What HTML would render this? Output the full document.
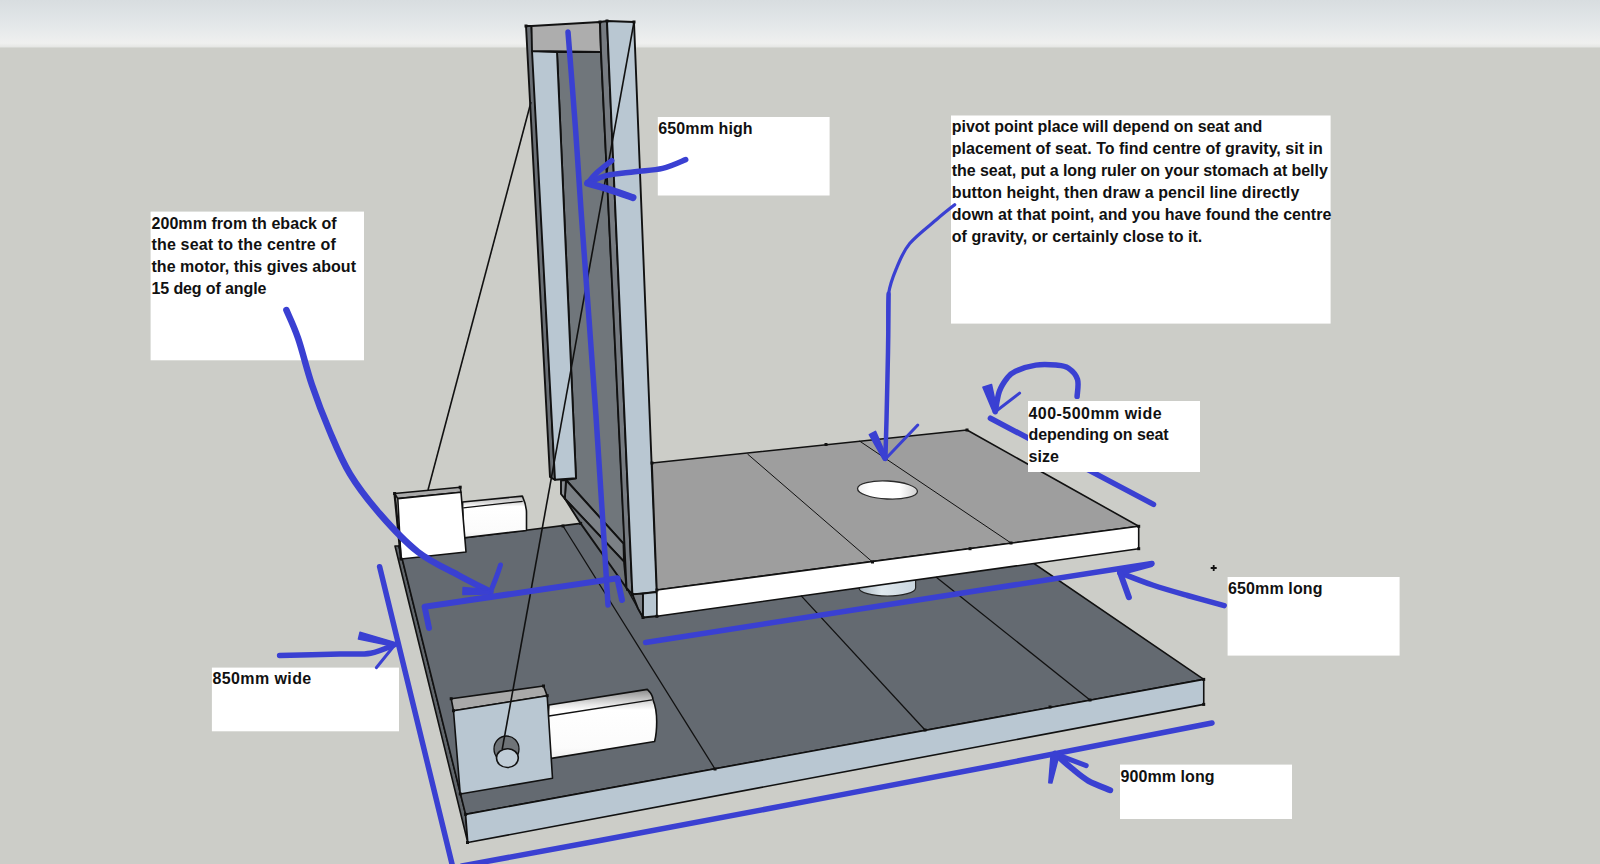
<!DOCTYPE html>
<html><head><meta charset="utf-8">
<style>
html,body{margin:0;padding:0;width:1600px;height:864px;overflow:hidden;background:#cccdc8;}
svg{display:block;}
text{font-family:"Liberation Sans",sans-serif;font-weight:bold;font-size:16px;fill:#111;}
</style></head><body>
<svg width="1600" height="864" viewBox="0 0 1600 864">
<defs>
<linearGradient id="sky" x1="0" y1="0" x2="0" y2="1">
<stop offset="0" stop-color="#d8dde0"/>
<stop offset="0.5" stop-color="#e3e7e9"/>
<stop offset="0.9" stop-color="#eff0ef"/>
<stop offset="1" stop-color="#e2e3e1"/>
</linearGradient>
<linearGradient id="cyl" x1="0" y1="0" x2="0" y2="1">
<stop offset="0" stop-color="#8a8a8a"/>
<stop offset="0.22" stop-color="#e6e6e6"/>
<stop offset="0.3" stop-color="#ffffff"/>
<stop offset="0.85" stop-color="#fbfbfb"/>
<stop offset="1" stop-color="#eeeeee"/>
</linearGradient>
<linearGradient id="cyl2" x1="0" y1="0" x2="0" y2="1">
<stop offset="0" stop-color="#b8b8b8"/>
<stop offset="0.15" stop-color="#d8d8d8"/>
<stop offset="0.25" stop-color="#ffffff"/>
<stop offset="0.85" stop-color="#fbfbfb"/>
<stop offset="1" stop-color="#eeeeee"/>
</linearGradient>
<linearGradient id="hole" x1="0" y1="0" x2="1" y2="0">
<stop offset="0" stop-color="#eeeeee"/>
<stop offset="0.2" stop-color="#ffffff"/>
<stop offset="0.7" stop-color="#ffffff"/>
<stop offset="1" stop-color="#d0d0d0"/>
</linearGradient>
<linearGradient id="piv" x1="0" y1="0" x2="1" y2="0">
<stop offset="0" stop-color="#a9b6c0"/>
<stop offset="0.4" stop-color="#dfe8ee"/>
<stop offset="1" stop-color="#c9d5de"/>
</linearGradient>
</defs>
<rect x="0" y="0" width="1600" height="48" fill="url(#sky)"/>
<rect x="0" y="47.5" width="1600" height="817" fill="#cccdc8"/>

<!-- BASE -->
<g id="base" stroke="#111" stroke-width="1.6" stroke-linejoin="round">
<polygon points="395,546 399,546 465.6,814.4 467.8,842.5" fill="#60656a"/>
<polygon points="399,546 580.6,523.4 913,481 1203.75,679.4 465.6,814.4" fill="#646a71"/>
<polygon points="465.6,814.4 1203.75,679.4 1203.75,704.4 467.8,842.5" fill="#b9c7d2"/>
</g>

<!-- BACK MOTOR -->
<g stroke="#111" stroke-width="1.6" stroke-linejoin="round">
<path d="M462.6,502 L522.4,496.1 C525,502 526.5,507 526.5,513 L526.5,530.5 L464,537.8 C463,525 462.6,512 462.6,502 Z" fill="url(#cyl2)"/>
<line x1="463.3" y1="507.9" x2="522.7" y2="501.3" stroke-width="1.3"/>
<polygon points="394.6,493.5 460.2,487.2 461,492.3 397.8,498.6" fill="#a9a9a9"/>
<polygon points="397.8,498.6 461,492.3 466,552 401,559" fill="#ffffff"/>
<line x1="394.6" y1="493.5" x2="401" y2="559" stroke-width="2.4"/>
</g>

<!-- FRONT MOTOR -->
<g stroke="#111" stroke-width="1.6" stroke-linejoin="round">
<path d="M548.9,705 L647.3,689.4 C650,692 653,696 653,699.8 C655.5,706 656.7,714 656.7,721.7 C656.7,729 656,736 654.6,741.5 L549.9,758.6 C549,745 548.3,730 548.3,717.5 Z" fill="url(#cyl)"/>
<line x1="548.9" y1="716" x2="652" y2="699.8" stroke-width="1.3"/>
<polygon points="451.2,698.75 543.5,686 547.2,695.75 453.5,710.75" fill="#a9a9a9"/>
<polygon points="453.5,710.75 547.2,695.75 552.5,778.25 460.25,794" fill="#b9c7d2"/>
<ellipse cx="506.5" cy="749" rx="12.5" ry="13" fill="#6f7478" stroke-width="1.3"/>
<ellipse cx="507.4" cy="758.1" rx="10.9" ry="9.4" fill="#c0cdd7" stroke-width="1.6"/>
</g>

<!-- COLUMN -->
<g stroke="#111" stroke-width="1.9" stroke-linejoin="round">
<polygon points="557,52 601,52 627,590 623.5,543.7 566,480 576,478.3" fill="#70767b"/>
<polygon points="566,480 623.5,543.7 624,561.7 564.8,498.6" fill="#7c8186"/>
<polygon points="564.8,498.6 624,561.7 626.5,588 580.6,523.4" fill="#6e7378"/>
<polygon points="561,480.5 566,480 564.8,498.6 561,494" fill="#8a8e93"/>
<polygon points="526,26 531.5,26 555,479.8 550,477" fill="#6a6f75"/>
<polygon points="532,51 557,52 576,478.3 555,479.8" fill="#b9c7d2"/>
<polygon points="531.5,26 600,22 601,52 532,51" fill="#adadad"/>
<polygon points="600,22 607,21 632.4,594.4 626.5,588 601,52" fill="#767b81"/>
<polygon points="607,21 634,22 656.7,592 632.4,594.4" fill="#b9c7d2"/>
<polygon points="632.4,594.4 643,593.6 643,617.5 638,608.6" fill="#7b8086"/>
<polygon points="643,593.6 656.7,592 658.3,616 643,617.5" fill="#b9c7d2"/>
<line x1="626.5" y1="588" x2="643" y2="617.5" stroke-width="1.3"/>
</g>

<!-- SEAT -->
<g stroke="#111" stroke-width="1.6" stroke-linejoin="round">
<path d="M859,580 L859,588 A28.3,8 0 0 0 915.6,588 L915.6,580 Z" fill="url(#piv)" stroke="#222" stroke-width="1.2"/>
<polygon points="652,463 967,430 1138.7,526.25 656.9,590" fill="#9e9e9e"/>
<polygon points="656.9,590 1138.7,526.25 1138.7,548.75 656.9,616.25" fill="#ffffff"/>
<line x1="747.5" y1="454" x2="872.5" y2="562" stroke-width="1"/>
<line x1="859.5" y1="441" x2="1011" y2="543" stroke-width="1"/>
<ellipse cx="887.5" cy="490" rx="30" ry="9" fill="url(#hole)" stroke="#2a2a2a" stroke-width="1.3" transform="rotate(3 887.5 490)"/>
</g>

<!-- BASE LINES -->
<g stroke="#111" stroke-width="1.3" fill="none">
<line x1="563" y1="526" x2="715" y2="769"/>
<line x1="801" y1="595.6" x2="925" y2="730"/>
<line x1="936" y1="577" x2="1090" y2="700"/>
</g>

<!-- DOTS -->
<g fill="#111">
<rect x="650.5" y="461.5" width="3" height="3"/><rect x="824.5" y="443" width="3" height="3"/><rect x="965.5" y="428.5" width="3" height="3"/><rect x="1137.2" y="524.8" width="3" height="3"/><rect x="1137.2" y="547.2" width="3" height="3"/><rect x="1009.5" y="541.5" width="3" height="3"/><rect x="968.5" y="547.2" width="3" height="3"/><rect x="871.0" y="560.5" width="3" height="3"/><rect x="655.4" y="588.5" width="3" height="3"/><rect x="655.4" y="614.8" width="3" height="3"/><rect x="1202.2" y="677.9" width="3" height="3"/><rect x="1202.2" y="702.9" width="3" height="3"/><rect x="1088.5" y="698.5" width="3" height="3"/><rect x="1048.5" y="705.5" width="3" height="3"/><rect x="923.5" y="728.5" width="3" height="3"/><rect x="713.5" y="767.5" width="3" height="3"/><rect x="464.1" y="812.9" width="3" height="3"/><rect x="466.0" y="841.0" width="3" height="3"/><rect x="561.5" y="524.5" width="3" height="3"/><rect x="579.1" y="521.9" width="3" height="3"/><rect x="524.5" y="24.5" width="3" height="3"/><rect x="598.5" y="20.5" width="3" height="3"/><rect x="605.5" y="19.5" width="3" height="3"/><rect x="632.5" y="20.5" width="3" height="3"/><rect x="630.9" y="592.9" width="3" height="3"/><rect x="641.5" y="616.0" width="3" height="3"/><rect x="393.1" y="492.0" width="3" height="3"/><rect x="458.7" y="485.7" width="3" height="3"/><rect x="399.5" y="557.5" width="3" height="3"/><rect x="449.7" y="697.2" width="3" height="3"/><rect x="542.0" y="684.5" width="3" height="3"/><rect x="458.8" y="792.5" width="3" height="3"/><rect x="452.0" y="709.2" width="3" height="3"/><rect x="545.7" y="694.2" width="3" height="3"/>
<path d="M1213.7,565 L1213.7,571 M1210.7,568 L1216.7,568" stroke="#111" stroke-width="1.8"/>
</g>
<!-- CABLES -->
<g stroke="#111" stroke-width="1.6" fill="none">
<line x1="428" y1="490" x2="531" y2="102"/>
<line x1="502.2" y1="749.3" x2="634" y2="22"/>
</g>

<g stroke="#3a40d2" stroke-linecap="round" stroke-linejoin="round" fill="none">
<path d="M990.4,418.2 L1153.5,504.4" stroke-width="5.5"/>
</g>
<!-- TEXT BOXES -->
<g fill="#ffffff">
<rect x="150.6" y="211.6" width="213.4" height="148.7"/>
<rect x="657.8" y="117" width="171.8" height="78.5"/>
<rect x="951" y="115.5" width="379.6" height="208.1"/>
<rect x="1028" y="401" width="172" height="71"/>
<rect x="1227.6" y="577" width="172" height="78.6"/>
<rect x="211.9" y="667.6" width="187.1" height="63.7"/>
<rect x="1120" y="764.6" width="172" height="54.4"/>
</g>
<!-- BLUE MARKER -->
<g stroke="#3a40d2" stroke-linecap="round" stroke-linejoin="round" fill="none">
<path d="M568.0,32.0 C569.3,48.3 573.4,100.3 575.6,130.0 C577.8,159.7 577.6,162.3 581.0,210.0 C584.4,257.7 592.2,361.0 596.0,416.0 C599.8,471.0 602.0,508.5 604.0,540.0 C606.0,571.5 607.3,594.2 608.0,605.0" stroke-width="5.5"/>
<path d="M685.7,159.6 C681.9,161.1 671.1,166.4 662.6,168.4 C654.1,170.4 644.1,170.5 634.8,171.7 C625.5,172.9 614.9,173.5 607.0,175.4 C599.1,177.3 590.8,181.9 587.6,183.2" stroke-width="5.5"/>
<path d="M611.7,160.6 C609.1,162.8 600.0,169.7 596.0,173.5 C592.0,177.3 589.0,181.6 587.6,183.2" stroke-width="5.5"/>
<path d="M587.6,183.2 C591.1,184.2 601.3,186.9 608.9,189.3 C616.5,191.7 629.0,196.2 633.0,197.6" stroke-width="7"/>
<path d="M286.4,310.0 C288.3,314.7 293.7,325.5 298.0,338.0 C302.3,350.5 306.7,369.3 312.0,385.0 C317.3,400.7 323.7,417.2 330.0,432.0 C336.3,446.8 341.7,460.3 350.0,474.0 C358.3,487.7 368.7,501.0 380.0,514.0 C391.3,527.0 405.0,541.8 418.0,552.0 C431.0,562.2 445.9,568.4 458.0,575.0 C470.1,581.6 485.0,589.1 490.4,591.9" stroke-width="6.5"/>
<path d="M500.5,565.0 C499.8,567.2 497.7,573.5 496.0,578.0 C494.3,582.5 491.3,589.6 490.4,591.9" stroke-width="5"/>
<polygon points="462.9,594.5 489.9,594.0 490.1,590.0 463.1,587.5" fill="#3a40d2" stroke="#3a40d2" stroke-width="1.5"/>
<path d="M429,628 L424.6,606.7 L617.5,578.3" stroke-width="6"/>
<path d="M617.5,579.0 L622.0,600.0" stroke-width="6"/>
<path d="M379.6,566.7 L452.5,866.0" stroke-width="5.5"/>
<path d="M279.6,655.4 C289.7,655.2 324.8,654.5 340.0,654.1 C355.2,653.7 361.4,654.8 370.6,653.2 C379.8,651.6 391.0,646.0 395.1,644.5" stroke-width="5.5"/>
<polygon points="358.4,639.1 394.6,646.4 395.6,642.6 360.0,632.3" fill="#3a40d2" stroke="#3a40d2" stroke-width="1.5"/>
<path d="M376.3,667.7 L395.1,644.5" stroke-width="3"/>
<path d="M645.6,642.5 L1152.0,563.5" stroke-width="5.5"/>
<path d="M1224.2,605.6 C1218.1,603.9 1199.5,598.9 1187.5,595.5 C1175.5,592.1 1163.7,588.8 1152.5,585.0 C1141.3,581.2 1125.5,574.8 1120.1,572.7" stroke-width="5.5"/>
<path d="M1120.1,572.7 L1150.7,564.4" stroke-width="6"/>
<path d="M1120.1,572.7 L1128.9,597.2" stroke-width="6"/>
<path d="M462.0,866.0 C485.0,861.8 510.3,857.4 600.0,840.5 C689.7,823.6 898.0,784.1 1000.0,764.5 C1102.0,744.9 1176.7,729.9 1212.0,723.0" stroke-width="5.5"/>
<path d="M1055.0,753.8 C1057.8,756.2 1066.2,763.8 1071.7,768.3 C1077.2,772.8 1081.9,777.1 1088.3,780.8 C1094.7,784.4 1106.5,788.6 1110.2,790.2" stroke-width="6"/>
<path d="M1055.0,753.8 L1086.2,765.7" stroke-width="5"/>
<polygon points="1051.1,754.3 1048.8,782.7 1051.8,783.1 1058.9,755.7" fill="#3a40d2" stroke="#3a40d2" stroke-width="1.5"/>
<path d="M1077.1,396.3 C1077.2,393.5 1079.0,384.0 1077.5,379.3 C1076.0,374.6 1071.8,370.4 1068.2,368.0 C1064.6,365.6 1061.4,365.6 1056.0,365.1 C1050.6,364.6 1042.5,364.1 1035.8,365.1 C1029.0,366.1 1020.2,369.1 1015.5,371.2 C1010.8,373.3 1010.1,374.3 1007.4,377.7 C1004.7,381.1 1001.3,385.8 999.3,391.5 C997.3,397.2 996.0,408.3 995.3,411.7" stroke-width="5.5"/>
<polygon points="982.9,387.1 993.4,412.3 997.2,411.1 991.5,384.5" fill="#3a40d2" stroke="#3a40d2" stroke-width="1.5"/>
<path d="M1019.6,393.1 L995.3,411.7" stroke-width="3"/>
<path d="M954.7,204.7 C951.8,207.1 944.7,212.5 937.2,219.0 C929.7,225.5 916.5,235.4 909.7,243.5 C903.0,251.6 900.2,259.4 896.7,267.8 C893.2,276.2 890.1,283.3 888.6,293.7 C887.1,304.1 888.1,323.9 888.0,330.0" stroke-width="3.2"/>
<path d="M888.6,293.7 C888.5,303.4 888.4,330.9 888.0,352.0 C887.6,373.1 886.9,402.2 886.5,420.0 C886.1,437.8 885.6,452.5 885.4,459.0" stroke-width="4.5"/>
<polygon points="869.3,434.6 883.6,459.9 887.2,458.1 875.5,431.4" fill="#3a40d2" stroke="#3a40d2" stroke-width="1.5"/>
<path d="M917.8,425.0 L885.4,459.0" stroke-width="3"/>
</g>
<g>
<text x="151.5" y="228.5" textLength="185.2" lengthAdjust="spacing">200mm from th eback of</text>
<text x="151.5" y="250.3" textLength="184.3" lengthAdjust="spacing">the seat to the centre of</text>
<text x="151.5" y="272.1" textLength="204.5" lengthAdjust="spacing">the motor, this gives about</text>
<text x="151.5" y="293.9" textLength="114.9" lengthAdjust="spacing">15 deg of angle</text>
<text x="658.3" y="134" textLength="94.3" lengthAdjust="spacing">650mm high</text>
<text x="951.8" y="132.4" textLength="310.5" lengthAdjust="spacing">pivot point place will depend on seat and</text>
<text x="951.8" y="154.25" textLength="370.9" lengthAdjust="spacing">placement of seat. To find centre of gravity, sit in</text>
<text x="951.8" y="176.1" textLength="376.0" lengthAdjust="spacing">the seat, put a long ruler on your stomach at belly</text>
<text x="951.8" y="197.95" textLength="347.5" lengthAdjust="spacing">button height, then draw a pencil line directly</text>
<text x="951.8" y="219.8" textLength="379.5" lengthAdjust="spacing">down at that point, and you have found the centre</text>
<text x="951.8" y="241.65" textLength="250.4" lengthAdjust="spacing">of gravity, or certainly close to it.</text>
<text x="1028.5" y="418.5" textLength="133.1" lengthAdjust="spacing">400-500mm wide</text>
<text x="1028.5" y="439.7" textLength="140.2" lengthAdjust="spacing">depending on seat</text>
<text x="1028.5" y="461.6" textLength="30.4" lengthAdjust="spacing">size</text>
<text x="1228" y="593.6" textLength="94.5" lengthAdjust="spacing">650mm long</text>
<text x="212.5" y="684" textLength="98.7" lengthAdjust="spacing">850mm wide</text>
<text x="1120.5" y="781.6" textLength="94.0" lengthAdjust="spacing">900mm long</text>
</g>
</svg>
</body></html>
